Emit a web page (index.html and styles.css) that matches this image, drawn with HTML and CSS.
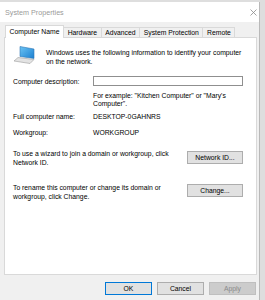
FILE: index.html
```html
<!DOCTYPE html>
<html>
<head>
<meta charset="utf-8">
<link rel="stylesheet" href="styles.css">
</head>
<body>
<div class="screen">
  <div class="dialog">
    <div class="titlebar">
      <span class="title">System Properties</span>
      <svg class="close" width="7" height="7" viewBox="0 0 7 7"><path d="M0.5 0.5 L6.5 6.5 M6.5 0.5 L0.5 6.5" stroke="#8a8a8a" stroke-width="0.8" fill="none"/></svg>
    </div>
    <div class="body">
      <div class="tabs">
        <div class="tab active">Computer Name</div>
        <div class="tab">Hardware</div>
        <div class="tab">Advanced</div>
        <div class="tab">System Protection</div>
        <div class="tab">Remote</div>
      </div>
      <div class="panel">
        <div class="intro">
          <svg class="pc-icon" width="22" height="18" viewBox="0 0 22 18">
            <defs>
              <linearGradient id="scr" x1="0" y1="0" x2="1" y2="1">
                <stop offset="0" stop-color="#6cc4f4"/>
                <stop offset="1" stop-color="#1a7fd0"/>
              </linearGradient>
            </defs>
            <polygon points="7,0.5 21,3 21,12.5 7,10.5" fill="url(#scr)" stroke="#2f77b5" stroke-width="0.6"/>
            <polygon points="5,11.5 21,13.5 17,17.5 1,15" fill="#e3e3e3" stroke="#9c9c9c" stroke-width="0.6"/>
          </svg>
          <p class="intro-text">Windows uses the following information to identify your computer<br>on the network.</p>
        </div>
        <div class="field-row">
          <span class="label">Computer description:</span>
          <div class="input"></div>
        </div>
        <p class="hint">For example: "Kitchen Computer" or "Mary's<br>Computer".</p>
        <div class="info-row first">
          <span class="label">Full computer name:</span>
          <span class="value">DESKTOP-0GAHNRS</span>
        </div>
        <div class="info-row">
          <span class="label">Workgroup:</span>
          <span class="value">WORKGROUP</span>
        </div>
        <div class="action-row first">
          <p class="action-text">To use a wizard to join a domain or workgroup, click<br>Network ID.</p>
          <div class="btn">Network ID...</div>
        </div>
        <div class="action-row second">
          <p class="action-text">To rename this computer or change its domain or<br>workgroup, click Change.</p>
          <div class="btn">Change...</div>
        </div>
      </div>
      <div class="buttons">
        <div class="btn dlg default">OK</div>
        <div class="btn dlg">Cancel</div>
        <div class="btn dlg disabled">Apply</div>
      </div>
    </div>
  </div>
</div>
</body>
</html>
```

FILE: styles.css
```css
* { box-sizing: border-box; }
html, body {
  margin: 0;
  padding: 0;
  width: 265px;
  height: 300px;
  overflow: hidden;
}
body {
  background: #e4e4e4;
  font-family: "Liberation Sans", Arial, sans-serif;
  font-size: 6.8px;
  color: #000000;
}
p { margin: 0; }
.screen {
  height: 300px;
  padding-top: 2px;
  background: #dedede;
}
.dialog {
  width: 260px;
  height: 298px;
  display: flex;
  flex-direction: column;
  border-right: 1px solid #b9b9b9;
  background: #f0f0f0;
}
.titlebar {
  height: 20px;
  background: #ffffff;
  display: flex;
  align-items: center;
  justify-content: space-between;
  padding: 0 2px 0 5px;
}
.title {
  color: #9a9a9a;
  font-size: 7.2px;
}
.body {
  flex: 1;
  display: flex;
  flex-direction: column;
  padding: 3px 2px 5px 4px;
}
.tabs {
  display: flex;
  align-items: flex-end;
  height: 12px;
  padding-left: 1px;
}
.tab {
  height: 10px;
  line-height: 9px;
  padding: 0 3.6px;
  border: 1px solid #d9d9d9;
  border-bottom: 0;
  border-left: 0;
  background: #f0f0f0;
  white-space: nowrap;
}
.tab.active {
  height: 13px;
  line-height: 11px;
  background: #ffffff;
  border-left: 1px solid #d9d9d9;
  margin-bottom: -1px;
  position: relative;
  z-index: 1;
}
.panel {
  flex: 1;
  background: #ffffff;
  border: 1px solid #d9d9d9;
  padding: 9px 13px 0 8px;
}
.intro {
  display: flex;
  align-items: flex-start;
  gap: 11px;
}
.pc-icon { margin-top: -1px; flex: none; }
.intro-text { line-height: 9px; padding-top: 1px; }
.field-row {
  display: flex;
  align-items: center;
  margin-top: 10px;
}
.label {
  width: 80px;
  flex: none;
}
.input {
  width: 150px;
  height: 10px;
  border: 1px solid #8f8f8f;
  background: #fff;
}
.hint {
  margin-top: 6px;
  padding-left: 80px;
  line-height: 8px;
}
.info-row {
  display: flex;
  line-height: 9px;
  margin-top: 7px;
}
.info-row.first { margin-top: 4px; }
.action-row {
  display: flex;
  justify-content: space-between;
  align-items: flex-start;
  margin-top: 12px;
}
.action-row.second { margin-top: 16px; }
.action-text { line-height: 9px; }
.btn {
  width: 56px;
  height: 13px;
  line-height: 11px;
  text-align: center;
  background: #e1e1e1;
  border: 1px solid #adadad;
  margin-top: 2px;
  flex: none;
}
.action-row.second .btn { margin-top: 1px; }
.buttons {
  display: flex;
  justify-content: flex-end;
  gap: 5px;
  margin-top: 7px;
  padding-right: 1px;
}
.btn.dlg {
  width: 47px;
  margin-top: 0;
}
.btn.default {
  border-color: #0078d7;
}
.btn.disabled {
  background: #cccccc;
  border-color: #bfbfbf;
  color: #8a8a8a;
}
```
